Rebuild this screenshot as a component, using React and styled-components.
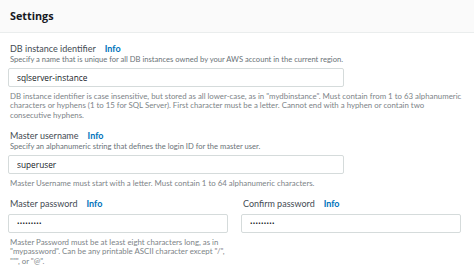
import React from 'react';
import styled, { createGlobalStyle } from 'styled-components';

const GlobalStyle = createGlobalStyle`
  html, body {
    margin: 0;
    padding: 0;
    background: #ffffff;
  }
  body {
    font-family: Lato, "Open Sans", sans-serif;
    -webkit-font-smoothing: antialiased;
  }
`;

const Panel = styled.section`
  width: 474px;
  height: 271px;
  overflow: hidden;
  background: #fff;
`;

const Header = styled.header`
  height: 33px;
  box-sizing: border-box;
  display: flex;
  align-items: center;
  padding: 0 10px 2px;
  background: #fafafa;
  border-bottom: 1px solid #eaeded;
`;

const Title = styled.h2`
  margin: 0;
  font-family: "Open Sans", sans-serif;
  font-size: 10.8px;
  font-weight: 700;
  color: #16191f;
`;

const Body = styled.div`
  padding: 10px 8px 0 8px;
  display: flex;
  flex-direction: column;
  gap: 10px;
`;

const Field = styled.div`
  display: flex;
  flex-direction: column;
`;

const Row = styled.div`
  display: grid;
  grid-template-columns: 220px 220px;
  column-gap: 13px;
`;

const Label = styled.label`
  display: flex;
  align-items: center;
  gap: 9px;
  padding-left: 2px;
  font-size: 9px;
  line-height: 12px;
  color: #444b53;
`;

const Info = styled.a`
  color: #0073bb;
  font-weight: 700;
  text-decoration: none;
`;

const Description = styled.div`
  padding-left: 2px;
  font-size: 7.6px;
  line-height: 9px;
  color: #6b7378;
`;

const Input = styled.input`
  box-sizing: border-box;
  width: ${(p) => p.$width || '336px'};
  height: 19px;
  margin-top: 4px;
  padding: 0 8px;
  border: 1px solid #d5dbdb;
  border-radius: 2px;
  font-family: "Open Sans", sans-serif;
  font-size: ${(p) => (p.type === 'password' ? '6.5px' : '8.3px')};
  letter-spacing: ${(p) => (p.type === 'password' ? '0.3px' : '0')};
  color: #16191f;
  background: #fff;
  outline: none;
`;

const Constraint = styled.div`
  margin-top: 5px;
  padding-left: 2px;
  font-size: 7.85px;
  line-height: 9.3px;
  color: #7d8488;
  max-width: ${(p) => p.$max || '456px'};
`;

export default function App() {
  return (
    <>
      <GlobalStyle />
      <Panel>
        <Header>
          <Title>Settings</Title>
        </Header>
        <Body>
          <Field>
            <Label>
              DB instance identifier <Info href="#">Info</Info>
            </Label>
            <Description>
              Specify a name that is unique for all DB instances owned by your AWS account in the current region.
            </Description>
            <Input type="text" defaultValue="sqlserver-instance" />
            <Constraint>
              DB instance identifier is case insensitive, but stored as all lower-case, as in "mydbinstance". Must contain from 1 to 63 alphanumeric characters or hyphens (1 to 15 for SQL Server). First character must be a letter. Cannot end with a hyphen or contain two consecutive hyphens.
            </Constraint>
          </Field>

          <Field>
            <Label>
              Master username <Info href="#">Info</Info>
            </Label>
            <Description>
              Specify an alphanumeric string that defines the login ID for the master user.
            </Description>
            <Input type="text" defaultValue="superuser" />
            <Constraint>
              Master Username must start with a letter. Must contain 1 to 64 alphanumeric characters.
            </Constraint>
          </Field>

          <Row>
            <Field>
              <Label>
                Master password <Info href="#">Info</Info>
              </Label>
              <Input type="password" defaultValue="superuser" $width="220px" />
              <Constraint $max="226px">
                Master Password must be at least eight characters long, as in "mypassword". Can be any printable ASCII character except "/", """, or "@".
              </Constraint>
            </Field>
            <Field>
              <Label>
                Confirm password <Info href="#">Info</Info>
              </Label>
              <Input type="password" defaultValue="superuser" $width="220px" />
            </Field>
          </Row>
        </Body>
      </Panel>
    </>
  );
}
